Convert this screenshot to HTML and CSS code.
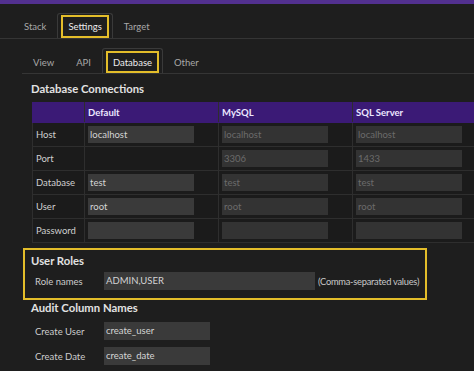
FILE: index.html
```html
<!DOCTYPE html>
<html>
<head>
<meta charset="utf-8">
<link rel="stylesheet" href="styles.css">
</head>
<body>
<div class="topbar"></div>
<div class="tabs outer">
  <div class="tab"><span class="lbl">Stack</span></div>
  <div class="tab active"><span class="lbl hl">Settings</span></div>
  <div class="tab"><span class="lbl">Target</span></div>
</div>
<div class="tabs inner">
  <div class="tab"><span class="lbl">View</span></div>
  <div class="tab"><span class="lbl">API</span></div>
  <div class="tab active"><span class="lbl hl">Database</span></div>
  <div class="tab"><span class="lbl">Other</span></div>
</div>
<div class="content">
  <h2 class="heading">Database Connections</h2>
  <table class="grid">
    <colgroup>
      <col class="w-label"><col class="w-col"><col class="w-col"><col class="w-col">
    </colgroup>
    <thead>
      <tr><th></th><th>Default</th><th>MySQL</th><th>SQL Server</th></tr>
    </thead>
    <tbody>
      <tr><td class="c-label">Host</td><td><div class="inp">localhost</div></td><td><div class="inp dis">localhost</div></td><td><div class="inp dis">localhost</div></td></tr>
      <tr><td class="c-label">Port</td><td></td><td><div class="inp dis">3306</div></td><td><div class="inp dis">1433</div></td></tr>
      <tr><td class="c-label">Database</td><td><div class="inp">test</div></td><td><div class="inp dis">test</div></td><td><div class="inp dis">test</div></td></tr>
      <tr><td class="c-label">User</td><td><div class="inp">root</div></td><td><div class="inp dis">root</div></td><td><div class="inp dis">root</div></td></tr>
      <tr><td class="c-label">Password</td><td><div class="inp"></div></td><td><div class="inp dis"></div></td><td><div class="inp dis"></div></td></tr>
    </tbody>
  </table>
  <div class="roles">
    <h2 class="heading sub">User Roles</h2>
    <div class="frow">
      <span class="flabel">Role names</span>
      <div class="inp wide">ADMIN,USER</div>
      <span class="note">(Comma-separated values)</span>
    </div>
  </div>
  <h2 class="heading audit">Audit Column Names</h2>
  <div class="frow">
    <span class="flabel">Create User</span>
    <div class="inp">create_user</div>
  </div>
  <div class="frow">
    <span class="flabel">Create Date</span>
    <div class="inp">create_date</div>
  </div>
</div>
</body>
</html>
```

FILE: styles.css
```css
html, body {
  margin: 0;
  padding: 0;
  background: #1e1e1e;
  overflow: hidden;
  width: 474px;
  height: 371px;
}
body {
  font-family: "Lato", "Open Sans", sans-serif;
  font-size: 9.5px;
  color: #cccccc;
}
.topbar {
  height: 4px;
  background: #52308f;
}
.tabs {
  display: flex;
  align-items: flex-end;
  border-bottom: 1px solid #353535;
}
.tabs.outer {
  height: 34px;
  padding-left: 13px;
}
.tabs.inner {
  height: 34px;
  margin-left: 22px;
}
.tab {
  height: 25px;
  padding: 0 3px;
  display: flex;
  align-items: flex-end;
  box-sizing: border-box;
  border: 1px solid transparent;
  border-bottom: none;
  border-radius: 3px 3px 0 0;
}
.tab.active {
  border-color: #3a3a3a;
}
.lbl {
  height: 23px;
  line-height: 22px;
  padding: 0 6px;
  color: #a8a8a8;
  box-sizing: border-box;
  border: 1px solid transparent;
  white-space: nowrap;
}
.tabs.inner .lbl {
  height: 22px;
  line-height: 21px;
}
.lbl.hl {
  border: 2px solid #e3bd2a;
  padding: 0 5px;
  line-height: 20px;
  color: #ececec;
}
.tabs.inner .lbl.hl {
  line-height: 19px;
}
.content {
  margin-left: 31px;
}
.heading {
  margin: 0;
  font-size: 11.3px;
  font-weight: 700;
  color: #e2e2e2;
  line-height: 14px;
  padding: 8px 0 6px;
  white-space: nowrap;
}
.grid {
  border-collapse: collapse;
  margin-left: 1px;
  table-layout: fixed;
  width: 453px;
}
.w-label { width: 52px; }
.w-col { width: 134px; }
.grid th, .grid td {
  border: 1px solid #2e2e2e;
  padding: 0 0 0 3px;
  text-align: left;
  vertical-align: middle;
  white-space: nowrap;
  overflow: hidden;
}
.grid th {
  background: #3b1a76;
  height: 19px;
  color: #ece6ff;
  font-weight: 700;
  font-size: 9.5px;
  border-color: #3b1a76;
  border-right-color: #2e2e2e;
}
.grid td {
  background: #1b1b1b;
  height: 23px;
}
.grid .c-label {
  color: #cfcfcf;
}
.inp {
  width: 106px;
  height: 17px;
  line-height: 17px;
  background: #3a3a3a;
  color: #d4d4d4;
  padding-left: 2px;
  box-sizing: border-box;
  margin-left: 0;
  white-space: nowrap;
}
.inp.dis {
  background: #333333;
  color: #6b6b6b;
}
.roles {
  margin: 5px 0 0 -8px;
  width: 404px;
  height: 52px;
  box-sizing: border-box;
  border: 2px solid #e3bd2a;
  padding-left: 6px;
}
.heading.sub {
  padding: 4px 0 4px;
}
.frow {
  display: flex;
  align-items: center;
  height: 18px;
  padding-left: 4px;
}
.flabel {
  width: 69px;
  flex: none;
  white-space: nowrap;
}
.frow .inp {
  flex: none;
  height: 18px;
  line-height: 18px;
}
.inp.wide {
  width: 211px;
}
.note {
  margin-left: 3px;
  color: #c8c8c8;
  white-space: nowrap;
  font-size: 9.3px;
  letter-spacing: -0.25px;
}
.heading.audit {
  padding: 1px 0 7px;
}
.frow + .frow {
  margin-top: 7px;
}
```
